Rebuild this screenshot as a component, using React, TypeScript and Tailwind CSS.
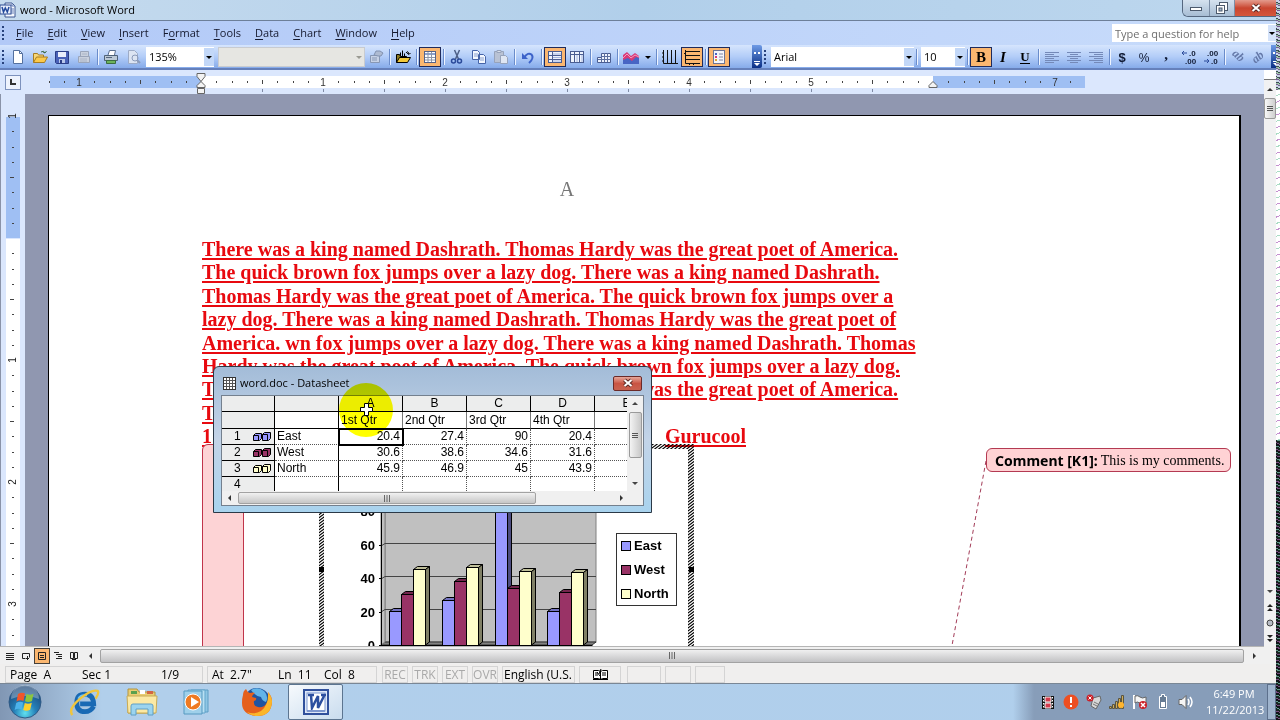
import type { ReactNode } from "react";
import clsx from "clsx";

const menus = [
  { label: "File", key: 0 },
  { label: "Edit", key: 0 },
  { label: "View", key: 0 },
  { label: "Insert", key: 0 },
  { label: "Format", key: 1 },
  { label: "Tools", key: 0 },
  { label: "Data", key: 0 },
  { label: "Chart", key: 0 },
  { label: "Window", key: 0 },
  { label: "Help", key: 0 },
];

const bodyLines = [
  "There was a king named Dashrath. Thomas Hardy was the great poet of America.",
  "The quick brown fox jumps over a lazy dog. There was a king named Dashrath.",
  "Thomas Hardy was the great poet of America. The quick brown fox jumps over a",
  "lazy dog. There was a king named Dashrath. Thomas Hardy was the great poet of",
  "America. wn fox jumps over a lazy dog. There was a king named Dashrath. Thomas",
  "Hardy was the great poet of America. The quick brown fox jumps over a lazy dog.",
  "There was a king named Dashrath. Thomas Hardy was the great poet of America.",
  "The quick brown fox jumps over a lazy dog.",
];

const sheetRows = [
  { n: 1, name: "East", color: "#9999ff", values: ["20.4", "27.4", "90", "20.4"] },
  { n: 2, name: "West", color: "#993366", values: ["30.6", "38.6", "34.6", "31.6"] },
  { n: 3, name: "North", color: "#ffffcc", values: ["45.9", "46.9", "45", "43.9"] },
];

const bars = [
  { x: 389, y: 610, s: 0 },
  { x: 401, y: 593, s: 1 },
  { x: 413, y: 568, s: 2 },
  { x: 442, y: 599, s: 0 },
  { x: 454, y: 580, s: 1 },
  { x: 466, y: 566, s: 2 },
  { x: 495, y: 495, s: 0 },
  { x: 507, y: 587, s: 1 },
  { x: 519, y: 570, s: 2 },
  { x: 547, y: 610, s: 0 },
  { x: 559, y: 591, s: 1 },
  { x: 571, y: 571, s: 2 },
];

const series = [
  { name: "East", front: "#9999ff", side: "#4d4d80", top: "#7373bf" },
  { name: "West", front: "#993366", side: "#4d1a33", top: "#73264d" },
  { name: "North", front: "#ffffcc", side: "#808066", top: "#bfbf99" },
];

function Arrow({ dir = "down", className = "text-black" }: { dir?: string; className?: string }) {
  const d: Record<string, string> = {
    down: "M1 3h6l-3 3z",
    up: "M1 5h6l-3-3z",
    left: "M5 1v6l-3-3z",
    right: "M3 1v6l3-3z",
  };
  return (
    <svg viewBox="0 0 8 8" className={clsx("h-2 w-2 shrink-0", className)}>
      <path d={d[dir]} fill="currentColor" />
    </svg>
  );
}

function Handle() {
  return (
    <svg viewBox="0 0 3 16" className="mx-[2px] h-4 w-[3px] shrink-0">
      {[1, 5, 9, 13].map((y) => (
        <rect key={y} y={y} width="2" height="2" fill="#27417c" />
      ))}
    </svg>
  );
}

function Sep() {
  return <span className="mx-[2px] h-4 w-px shrink-0 bg-[#6a8ccb] shadow-[1px_0_0_#eef4ff]" />;
}

function ToolButton({ label, active, children }: { label: string; active?: boolean; children: ReactNode }) {
  return (
    <button
      type="button"
      aria-label={label}
      className={clsx(
        "flex h-5 w-[22px] shrink-0 items-center justify-center",
        active && "border border-[#1f2b5c] bg-[#fbb770]"
      )}
    >
      <svg viewBox="0 0 16 16" className="h-4 w-4 shrink-0 overflow-visible" fill="none">
        {children}
      </svg>
    </button>
  );
}

function Combo({ label, value, className, disabled }: { label: string; value: string; className: string; disabled?: boolean }) {
  return (
    <label
      className={clsx(
        "flex h-5 shrink-0 items-center",
        disabled ? "border border-[#c8cbd0] bg-[#e6e6e2]" : "bg-white",
        className
      )}
    >
      <select
        aria-label={label}
        disabled={disabled}
        className="h-5 min-w-0 flex-1 appearance-none bg-transparent pl-[3px] text-[11px] leading-5 text-black outline-none"
      >
        <option>{value}</option>
      </select>
      <span className={clsx("flex h-[18px] w-[10px] items-center justify-center", !disabled && "bg-[#c3d8f8]")}>
        <Arrow className={disabled ? "text-[#9a9a92]" : "text-black"} />
      </span>
    </label>
  );
}

function Overflow() {
  return (
    <button type="button" aria-label="Toolbar options" className="flex h-[23px] w-[10px] shrink-0 items-end justify-center rounded-r-xs bg-linear-to-b from-[#6f9be6] to-[#0b2f86]">
      <svg viewBox="0 0 8 20" className="h-5 w-2" fill="#fff">
        <path d="M1 4h2v2H1zM5 4h2v2H5zM1 13h6v1H1zM1 15h6l-3 3z" />
      </svg>
    </button>
  );
}

function AppIcon({ className }: { className: string }) {
  return (
    <svg viewBox="0 0 16 16" className={className}>
      <path d="M5 1h7l3 3v11H5z" fill="#f6f9ff" stroke="#3d5690" />
      <path d="M12 1v3h3M11 7h3M11 9h3M11 11h3" stroke="#6b83ba" fill="none" />
      <rect x="0" y="3" width="11" height="9" fill="#e7eefb" stroke="#2b4a91" />
      <path d="M2 5l1.500 5L5.300 6l2 4L9 5" stroke="#234a9c" strokeWidth="1.500" fill="none" />
    </svg>
  );
}

function TitleBar() {
  return (
    <header className="flex h-[21px] shrink-0 border-b border-[#6d7f99] bg-linear-to-r from-[#c6dbee] via-[#b1cfea] to-[#bdd7ee]">
      <AppIcon className="mt-[2px] h-4 w-4" />
      <h1 className="ml-1 text-[11px] leading-5 text-black">word - Microsoft Word</h1>
      <div className="ml-auto flex h-[17px] overflow-hidden rounded-bl-md border-b border-l border-[#55677f]">
        <button type="button" aria-label="Minimize" className="flex w-[27px] items-center justify-center border-r border-[#7c8ea6] bg-linear-to-b from-[#d5e2ef] to-[#a7bdd4]">
          <svg viewBox="0 0 12 8" className="h-2 w-3"><rect x="0.500" y="3.500" width="11" height="3" fill="#fff" stroke="#4c5a6d" /></svg>
        </button>
        <button type="button" aria-label="Restore" className="flex w-[25px] items-center justify-center border-r border-[#7c8ea6] bg-linear-to-b from-[#d5e2ef] to-[#a7bdd4]">
          <svg viewBox="0 0 12 12" className="h-3 w-3" fill="#fff" stroke="#4c5a6d"><rect x="3.500" y="0.500" width="8" height="8" /><rect x="0.500" y="3.500" width="8" height="8" /><rect x="3" y="6" width="3" height="3" fill="#9fb4ca" /></svg>
        </button>
        <button type="button" aria-label="Close" className="flex w-[41px] items-center justify-center bg-linear-to-b from-[#e39a8c] via-[#c9452f] to-[#d5573c]">
          <CloseX />
        </button>
      </div>
    </header>
  );
}

function CloseX() {
  return (
    <svg viewBox="0 0 12 10" className="h-[10px] w-3">
      <path d="M2.500 2l7 6M9.500 2l-7 6" stroke="#5b2a25" strokeWidth="4" />
      <path d="M2.500 2l7 6M9.500 2l-7 6" stroke="#fff" strokeWidth="2" />
    </svg>
  );
}

function MenuBar() {
  return (
    <nav className="flex h-6 shrink-0 items-center bg-linear-to-r from-[#b2c9f7] to-[#c8dcfb]">
      <Handle />
      <ul className="ml-[2px] flex">
        {menus.map((m) => (
          <li key={m.label}>
            <a href="#" className="block px-[7px] text-[11px] leading-6 text-[#15192e]">
              {m.label.slice(0, m.key)}
              <span className="underline underline-offset-2">{m.label[m.key]}</span>
              {m.label.slice(m.key + 1)}
            </a>
          </li>
        ))}
      </ul>
      <div className="ml-auto flex h-[18px] w-[164px] items-center bg-white">
        <input
          type="text"
          aria-label="Type a question for help"
          placeholder="Type a question for help"
          className="h-full min-w-0 flex-1 pl-[3px] text-[11px] outline-none placeholder:text-[#6f6f6f]"
        />
        <button type="button" aria-label="Recent questions" className="flex h-4 w-2 items-center justify-center bg-[#d5e3fa]">
          <Arrow />
        </button>
      </div>
    </nav>
  );
}

function TextAlign({ kind }: { kind: string }) {
  const short: Record<string, string> = {
    left: "M1 5.500h9M1 9.500h9M1 13.500h9",
    center: "M4 5.500h8M4 9.500h8M4 13.500h8",
    right: "M6 5.500h9M6 9.500h9M6 13.500h9",
  };
  return <path d={"M1 3.500h14M1 7.500h14M1 11.500h14" + short[kind]} stroke="#7489b8" />;
}

function Toolbar() {
  return (
    <div className="flex h-[25px] shrink-0 items-center overflow-hidden border-b-2 border-[#6580bb] bg-linear-to-b from-[#d6e5fd] via-[#b3cdf8] to-[#86abea]">
      <Handle />
      <ToolButton label="New"><path d="M3.500 1.500h6l3 3v10h-9z" fill="#fff" stroke="#54709f" /><path d="M9.500 1.500v3h3" stroke="#54709f" /></ToolButton>
      <ToolButton label="Open">
        <path d="M1.500 13.500v-9h4l1 1.500h5v3" fill="#f7d77a" stroke="#a77d22" />
        <path d="M1.500 13.500L4.500 8h11l-3 5.500z" fill="#fbc94b" stroke="#a77d22" />
        <path d="M9 3q3-2 4 1m0 0l-2-1m2 1l1.500-2" stroke="#3f6a48" />
      </ToolButton>
      <ToolButton label="Save">
        <path d="M1.500 2.500h13v12h-12l-1-1z" fill="#4a62b8" stroke="#2b3d86" />
        <rect x="4" y="3" width="8" height="5" fill="#e9eefc" />
        <rect x="5" y="10" width="6" height="4" fill="#b9c7ea" /><rect x="6" y="11" width="2" height="3" fill="#2b3d86" />
      </ToolButton>
      <ToolButton label="Permission"><path d="M4.500 2.500h8v5h-8zM2.500 7.500h11v6h-11z" fill="#c9d0dd" stroke="#9aa5ba" /><path d="M4 10h7M4 12h7M6 5h5" stroke="#aab4c6" /></ToolButton>
      <Sep />
      <ToolButton label="Print">
        <path d="M5 6l1.500-4.500h6L11.500 6" fill="#fff" stroke="#5b6f8e" />
        <path d="M1.500 6.500h13v5h-13z" fill="#bcc9d6" stroke="#4f6278" />
        <path d="M3.500 11.500h9v3h-9z" fill="#6db35c" stroke="#3b6d41" /><path d="M3 8.500h6" stroke="#56677d" />
      </ToolButton>
      <ToolButton label="Print preview"><path d="M3.500 1.500h6l3 3v10h-9z" fill="#dce4f2" stroke="#9dabc6" /><circle cx="10" cy="9" r="3" stroke="#8b9bba" /><path d="M12 11l3 3" stroke="#8b9bba" strokeWidth="2" /></ToolButton>
      <Combo label="Zoom" value="135%" className="ml-[2px] w-[68px]" />
      <Combo label="Chart objects" value="" disabled className="ml-1 w-[147px]" />
      <ToolButton label="Format object"><path d="M2.500 6.500h9v7h-9z" fill="#c7d2e6" stroke="#8797b4" /><path d="M4 9h5M4 11h5" stroke="#8797b4" /><path d="M6 6l2-4h4l3 2-2 3h-3z" fill="#aebbd2" stroke="#8292b0" /></ToolButton>
      <Sep />
      <ToolButton label="Import file">
        <path d="M1.500 13.500v-8h3l1 2h6v2" fill="#8a7a22" stroke="#000" />
        <path d="M1.500 13.500l3-5h11l-3 5z" fill="#f2c838" stroke="#000" />
        <path d="M5.500 7V3.500M7.500 7V1.500M9.500 7V4.500M11 4q2-3 3 1m-2-1l2 1.500L15.500 4" stroke="#000" />
      </ToolButton>
      <Sep />
      <ToolButton label="View datasheet" active><rect x="2.500" y="2.500" width="11" height="11" fill="#fff" stroke="#58648a" /><path d="M3 5h10" stroke="#8ea2cf" strokeWidth="2" /><path d="M3 8.500h10M3 11h10M6 3v10M9.500 3v10" stroke="#8e95a8" /></ToolButton>
      <Sep />
      <ToolButton label="Cut"><path d="M5.500 1l4 9M10.500 1l-4 9" stroke="#4d5f86" strokeWidth="1.500" /><circle cx="4.500" cy="12" r="2" stroke="#2a4a9a" strokeWidth="1.500" /><circle cx="10.500" cy="12" r="2" stroke="#2a4a9a" strokeWidth="1.500" /></ToolButton>
      <ToolButton label="Copy"><path d="M1.500 1.500h5l2 2v7h-7zM7.500 5.500h5l2 2v7h-7z" fill="#f4f8ff" stroke="#4664a8" /><path d="M3 5h4M3 7h4M9 9h4M9 11h4" stroke="#8aa0cd" /></ToolButton>
      <ToolButton label="Paste"><path d="M1.500 2.500h9v11h-9z" fill="#b9c2d4" stroke="#97a3bb" /><path d="M4 1.500h4v2H4z" fill="#d9dfeb" stroke="#97a3bb" /><path d="M7.500 6.500h5l2 2v6h-7z" fill="#dfe6f3" stroke="#97a3bb" /></ToolButton>
      <Sep />
      <ToolButton label="Undo"><path d="M2 4v6h6z" fill="#3d63c9" /><path d="M4.500 8Q8 3 11.500 5.500q3 3.500-2.500 8.500" stroke="#3d63c9" strokeWidth="2" /></ToolButton>
      <Sep />
      <ToolButton label="By row" active><rect x="1.500" y="2.500" width="13" height="11" fill="#eef3fd" stroke="#4a5d91" /><path d="M2 6.500h12M2 10.500h12M5.500 3v10" stroke="#4a5d91" /><path d="M6 5h8M6 8.500h8M6 12h8" stroke="#a4b6e0" /></ToolButton>
      <ToolButton label="By column"><rect x="1.500" y="2.500" width="13" height="11" fill="#eef3fd" stroke="#4a5d91" /><path d="M2 5.500h12M5.500 3v10M10.500 3v10" stroke="#4a5d91" /><path d="M8 6v7M13 6v7" stroke="#a4b6e0" /></ToolButton>
      <Sep />
      <ToolButton label="Data table"><path d="M5.500 4.500h9v9h-13v-5h4z" fill="#eef3fd" stroke="#4a5d91" /><path d="M2 10.500h12M5.500 7.500h9M5.500 8v5M8.500 4v9M11.500 4v9" stroke="#5c6f9f" /></ToolButton>
      <Sep />
      <ToolButton label="Chart type"><path d="M0 6l4-3 4 4 4-3 4 3v7H0z" fill="#d83a78" /><path d="M0 11l5-2 4 3 4-4 3 1v6H0z" fill="#4865c4" /><path d="M0 9l4-4 4 4 4-3 4 2" stroke="#f59abd" /></ToolButton>
      <button type="button" aria-label="More chart types" className="flex h-5 w-3 shrink-0 items-center justify-center"><Arrow /></button>
      <Sep />
      <ToolButton label="Category axis gridlines"><path d="M1.500 1v13.500H16M5.500 1v13M9.500 1v13M13.500 1v13M0 4h2M0 8h2M0 12h2" stroke="#111" /></ToolButton>
      <ToolButton label="Value axis gridlines" active><path d="M1.500 1v13.500H16M1.500 2.500H16M1.500 6.500H16M1.500 10.500H16M0 4.500h2M5.500 14v2M9.500 14v2" stroke="#111" /></ToolButton>
      <Sep />
      <ToolButton label="Legend" active><rect x="2.500" y="1.500" width="11" height="13" fill="#f5f5fa" stroke="#6c7596" /><path d="M4 4h2v2H4z" fill="#4865c4" /><path d="M4 7h2v2H4z" fill="#d83a78" /><path d="M4 10h2v2H4z" fill="#e0a62c" /><path d="M8 5h4M8 8h4M8 11h4" stroke="#7c84a0" /></ToolButton>
      <span className="w-[22px] shrink-0" />
      <Overflow />
      <Handle />
      <Combo label="Font" value="Arial" className="ml-[2px] w-[143px]" />
      <Sep />
      <Combo label="Font size" value="10" className="ml-[2px] w-[44px]" />
      <Sep />
      <ToolButton label="Bold" active><text x="8" y="13" textAnchor="middle" fill="#000" className="font-['Liberation_Serif'] text-[15px] font-bold">B</text></ToolButton>
      <ToolButton label="Italic"><text x="8" y="13" textAnchor="middle" fill="#000" className="font-['Liberation_Serif'] text-[15px] font-bold italic">I</text></ToolButton>
      <ToolButton label="Underline"><text x="8" y="12" textAnchor="middle" fill="#000" className="font-['Liberation_Serif'] text-[13px] font-bold">U</text><path d="M3 14.500h10" stroke="#000" /></ToolButton>
      <Sep />
      <ToolButton label="Align left"><TextAlign kind="left" /></ToolButton>
      <ToolButton label="Center"><TextAlign kind="center" /></ToolButton>
      <ToolButton label="Align right"><TextAlign kind="right" /></ToolButton>
      <Sep />
      <ToolButton label="Currency style"><text x="7" y="13" textAnchor="middle" fill="#101a33" className="font-['Liberation_Sans'] text-[13px] font-bold">$</text></ToolButton>
      <ToolButton label="Percent style"><text x="7" y="13" textAnchor="middle" fill="#101a33" className="font-['Liberation_Sans'] text-[12px]">%</text></ToolButton>
      <ToolButton label="Comma style"><text x="7" y="10" textAnchor="middle" fill="#101a33" className="font-['Liberation_Serif'] text-[15px] font-bold">,</text></ToolButton>
      <ToolButton label="Increase decimal"><path d="M1 4h5M1 4l2-2M1 4l2 2" stroke="#2a4a9a" /><text x="8" y="7" fill="#101a33" className="font-['Liberation_Sans'] text-[8px] font-bold">.0</text><text x="4" y="15" fill="#101a33" className="font-['Liberation_Sans'] text-[8px] font-bold">.00</text></ToolButton>
      <ToolButton label="Decrease decimal"><path d="M1 12h5M6 12l-2-2M6 12l-2 2" stroke="#2a4a9a" /><text x="4" y="7" fill="#101a33" className="font-['Liberation_Sans'] text-[8px] font-bold">.00</text><text x="8" y="15" fill="#101a33" className="font-['Liberation_Sans'] text-[8px] font-bold">.0</text></ToolButton>
      <Sep />
      <ToolButton label="Angle clockwise"><text x="1" y="9" fill="#6478a8" transform="rotate(40 6 8)" className="font-['Liberation_Serif'] text-[12px] font-bold italic">ab</text></ToolButton>
      <ToolButton label="Angle counterclockwise"><text x="1" y="12" fill="#6478a8" transform="rotate(-40 6 10)" className="font-['Liberation_Serif'] text-[12px] font-bold italic">ab</text></ToolButton>
      <Overflow />
    </div>
  );
}

// 122px to the inch, eight divisions per inch, origin at the left margin
function HorizontalRuler() {
  const ticks = Array.from({ length: 69 }, (_, i) => i - 10);
  return (
    <div className="flex h-6 shrink-0 items-center bg-[#dbe7fd] pl-[5px]">
      <button type="button" aria-label="Tab stop" className="flex h-[15px] w-4 shrink-0 items-center justify-center border border-[#7d92bd] bg-[#eef3fd]">
        <svg viewBox="0 0 8 8" className="h-2 w-2"><path d="M2 1v5h5" stroke="#333" strokeWidth="2" fill="none" /></svg>
      </button>
      <svg viewBox="-172 0 1060 24" className="ml-2 h-6 w-[1060px] shrink-0">
        <rect x="-151" y="6" width="151" height="12" fill="#9fbff3" />
        <rect x="0" y="6" width="732" height="12" fill="#fff" />
        <rect x="732" y="6" width="152" height="12" fill="#9fbff3" />
        {ticks.map((t) => {
          const x = t * 15.25;
          if (t === 0) return null;
          if (t % 8 === 0)
            return (
              <text key={t} x={x} y="16" textAnchor="middle" fill="#333" className="font-['Liberation_Sans'] text-[10px]">
                {t === 48 ? "" : Math.abs(t / 8)}
              </text>
            );
          if (t > 57) return null;
          return <rect key={t} x={Math.round(x)} y={t % 4 === 0 ? 10 : 11} width="1" height={t % 4 === 0 ? 4 : 2} fill="#444" />;
        })}
        {ticks.filter((t) => t > 0 && t < 47 && t % 4 === 0).map((t) => (
          <rect key={t} x={Math.round(t * 15.25)} y="19" width="1" height="3" fill="#7f8aa5" />
        ))}
        <path d="M-4 3.500h8v3l-4 5-4-5zM-4 17.500v-2l4-4 4 4v2zM-3.500 18.500h7v5h-7z" fill="#f3f3f3" stroke="#666" />
        <path d="M728 17.500v-2l4-4 4 4v2z" fill="#f3f3f3" stroke="#666" />
      </svg>
    </div>
  );
}

function VerticalRuler() {
  return (
    <div className="h-full w-[25px] shrink-0 overflow-hidden border-l border-[#8a93a8] bg-[#dbe7fd]">
      <svg viewBox="1 94 24 700" className="h-[700px] w-6">
        <rect x="6" y="117" width="14" height="121" fill="#9fbff3" />
        <rect x="6" y="239" width="14" height="555" fill="#fff" />
        {Array.from({ length: 44 }, (_, i) => i - 8).map((t) => {
          const y = Math.round(238 + t * 15.25);
          if (t === 0) return null;
          if (t % 8 === 0)
            return (
              <text key={t} x="13" y={y + 3} textAnchor="middle" transform={`rotate(-90 13 ${y})`} fill="#222" className="font-['Liberation_Sans'] text-[10px]">
                {t === 24 ? 3 : Math.abs(t / 8)}
              </text>
            );
          return <rect key={t} x={t % 4 === 0 ? 10 : 12} y={y} width={t % 4 === 0 ? 4 : 2} height="1" fill="#444" />;
        })}
      </svg>
    </div>
  );
}

function ChartObject() {
  return (
    <svg viewBox="319 443 375 240" className="h-[240px] w-[375px] shrink-0" role="img" aria-label="Quarterly chart">
      <defs>
        <pattern id="hatch" width="4" height="3" patternUnits="userSpaceOnUse">
          <path d="M0 3L4 0M-1 .75L1-.75M3 3.750L5 2.250" stroke="#000" strokeWidth="1.100" />
        </pattern>
      </defs>
      <path d="M319 443h375v240H319zM324 448v235h364V448z" fillRule="evenodd" fill="url(#hatch)" />
      <rect x="319" y="566" width="5" height="5" />
      <rect x="689" y="566" width="5" height="5" />
      <rect x="385" y="470" width="211" height="171" fill="#c0c0c0" stroke="#808080" />
      <path d="M381 644l4-3h211l-4 3z" fill="#808080" stroke="#333" />
      <path d="M381 474l4-4v171l-4 3z" fill="#c0c0c0" stroke="#808080" />
      {[508, 542, 575, 608].map((y) => (
        <path key={y} d={`M381 ${y + 3}l4-2.500h211`} stroke="#444" fill="none" />
      ))}
      <path d="M381.500 470v176M379 644.500h213M379 611.500h3M379 577.500h3M379 544.500h3M434 644v3M486.500 644v3M539.500 644v3M592 644v3" stroke="#000" />
      {bars.map((b) => (
        <g key={b.x} stroke="#000" strokeWidth="1">
          <path d={`M${b.x + 0.5} ${b.y + 0.5}l4-3h12l-4 3z`} fill={series[b.s].top} />
          <path d={`M${b.x + 12.5} ${b.y + 0.5}l4-3V641l-4 3z`} fill={series[b.s].side} />
          <rect x={b.x + 0.5} y={b.y + 0.5} width="12" height={644 - b.y} fill={series[b.s].front} />
        </g>
      ))}
      <g className="font-['Liberation_Sans'] text-[13px] font-bold" textAnchor="end">
        <text x="375" y="515">80</text>
        <text x="375" y="549">60</text>
        <text x="375" y="582">40</text>
        <text x="375" y="616">20</text>
        <text x="375" y="649">0</text>
      </g>
      <rect x="616.500" y="532.500" width="60" height="72" fill="#fff" stroke="#333" />
      {series.map((s, i) => (
        <g key={s.name}>
          <rect x="621.500" y={540.5 + i * 24} width="9" height="9" fill={s.front} stroke="#000" />
          <text x="634" y={549 + i * 24} className="font-['Liberation_Sans'] text-[13px] font-bold">{s.name}</text>
        </g>
      ))}
    </svg>
  );
}

function DatasheetWindow() {
  const head = "h-4 border-r border-b border-black bg-[#eceded] font-normal";
  const grid = "border-r border-b border-dotted border-[#555]";
  return (
    <section className="absolute top-[296px] left-[213px] w-[439px] rounded-t-md border border-[#2b3947] bg-linear-to-b from-[#a3bcd8] via-[#c3d4e8] to-[#a9d3ee] px-[7px] pb-[6px]">
      <div className="flex h-7 items-center pt-1">
        <svg viewBox="0 0 13 13" className="ml-[2px] h-[13px] w-[13px]"><rect x="0.500" y="0.500" width="12" height="12" fill="#fff" stroke="#333" /><path d="M1 3.500h11M1 6.500h11M1 9.500h11M3.500 1v11M6.500 1v11M9.500 1v11" stroke="#555" /></svg>
        <h2 className="ml-1 text-[11px] text-black">word.doc - Datasheet</h2>
        <button type="button" aria-label="Close datasheet" className="mr-[2px] ml-auto flex h-[15px] w-[29px] items-center justify-center rounded-xs border border-[#6b2a28] bg-linear-to-b from-[#e5a79b] via-[#c95443] to-[#c96250]">
          <CloseX />
        </button>
      </div>
      <div className="border border-[#74808e] bg-[#f0f0f0]">
        <div className="flex">
          <div className="h-[95px] min-w-0 flex-1 overflow-hidden bg-white">
            <table className="w-[437px] table-fixed border-separate border-spacing-0 font-['Liberation_Sans'] text-[12px] leading-[15px] text-black">
              <colgroup>
                <col className="w-[53px]" />
                <col className="w-[64px]" />
                <col className="w-[64px]" />
                <col className="w-[64px]" />
                <col className="w-[64px]" />
                <col className="w-[64px]" />
                <col className="w-[64px]" />
              </colgroup>
              <thead>
                <tr>
                  <th className={head} />
                  <th className={head} />
                  {["A", "B", "C", "D", "E"].map((c) => (
                    <th key={c} className={head}>{c}</th>
                  ))}
                </tr>
                <tr>
                  <th className={head} />
                  <th className="h-[17px] border-r border-b border-black" />
                  {["1st Qtr", "2nd Qtr", "3rd Qtr", "4th Qtr", ""].map((q) => (
                    <th key={q} className="h-[17px] border-r border-b border-r-[#777] border-b-black pl-[2px] text-left font-normal whitespace-nowrap">{q}</th>
                  ))}
                </tr>
              </thead>
              <tbody>
                {sheetRows.map((r) => (
                  <tr key={r.n}>
                    <th className={head}>
                      <span className="flex items-center justify-between pr-[3px] pl-3">
                        {r.n}
                        <svg viewBox="0 0 18 9" className="h-[9px] w-[18px]" stroke="#000">
                          <path d="M.5 3.500l2-2h6v5l-2 2h-6z" fill={r.color} /><path d="M9.500 2.500l2-2h6v6l-2 2h-6z" fill={r.color} />
                          <path d="M.5 3.500h5v5M9.500 2.500h5v6" fill="none" />
                        </svg>
                      </span>
                    </th>
                    <th className="h-4 border-r border-b border-r-black border-b-[#555] [border-bottom-style:dotted] pl-[2px] text-left font-normal">{r.name}</th>
                    {r.values.map((v, i) => (
                      <td key={i} className={clsx("h-4 pr-[2px] text-right", grid, r.n === 1 && i === 0 && "outline-2 -outline-offset-1 outline-black")}>{v}</td>
                    ))}
                    <td className={clsx("h-4", grid)} />
                  </tr>
                ))}
                <tr>
                  <th className={head}><span className="block pl-3 text-left">4</span></th>
                  <th className="h-4 border-r border-black" />
                  {[0, 1, 2, 3, 4].map((c) => (
                    <td key={c} className={clsx("h-4", grid)} />
                  ))}
                </tr>
              </tbody>
            </table>
          </div>
          <div className="flex w-4 flex-col items-center bg-[#f0f0f0] py-1">
            <Arrow dir="up" className="text-[#444]" />
            <div className="mt-1 flex h-[46px] w-[13px] items-center justify-center rounded-xs border border-[#9a9a9a] bg-linear-to-r from-[#f3f3f3] to-[#c9c9c9]">
              <svg viewBox="0 0 6 7" className="h-[7px] w-[6px]"><path d="M0 1.500h6M0 3.500h6M0 5.500h6" stroke="#555" /></svg>
            </div>
            <Arrow className="mt-auto text-[#444]" />
          </div>
        </div>
        <div className="flex h-[14px] items-center">
          <Arrow dir="left" className="mx-1 text-[#333]" />
          <div className="flex h-3 w-[298px] items-center justify-center rounded-xs border border-[#a2a2a2] bg-linear-to-b from-[#f1f1f1] to-[#c6c6c6]">
            <Grip />
          </div>
          <Arrow dir="right" className="mr-[18px] ml-auto text-[#333]" />
        </div>
      </div>
      <svg viewBox="0 0 60 60" className="absolute top-[13px] left-[122px] h-[60px] w-[60px] mix-blend-multiply"><circle cx="30" cy="30" r="27" fill="#ffff00" /></svg>
      <svg viewBox="0 0 16 16" className="absolute top-[35px] left-[145px] h-4 w-4"><path d="M5.500 1.500h4v4h4v4h-4v4h-4v-4h-4v-4h4z" fill="#fff" stroke="#000" /></svg>
    </section>
  );
}

function Grip() {
  return (
    <svg viewBox="0 0 8 7" className="h-[7px] w-2"><path d="M1.500 0v7M4 0v7M6.500 0v7" stroke="#666" /></svg>
  );
}

function DocumentArea() {
  return (
    <div className="flex min-h-0 flex-1">
      <VerticalRuler />
      <div className="flex min-w-0 flex-1 overflow-hidden bg-[#9097b0] pt-[21px] pr-[23px] pl-[23px]">
        <article className="flex min-w-0 flex-1 self-stretch border-t border-r-2 border-l border-black bg-white pl-[153px] font-['Liberation_Serif']">
          <div className="w-[730px] shrink-0">
            <p className="pt-[61px] text-center text-[20px] leading-6 text-[#777]">A</p>
            <div className="mt-[37px] flex h-[210px] flex-col justify-between text-[20px] leading-[23px] font-bold whitespace-nowrap text-[#e8090f]">
              {bodyLines.map((line, i) => (
                <p key={i} className="underline decoration-2 underline-offset-2">{line}</p>
              ))}
              <p className="flex justify-between pr-[186px] underline decoration-2 underline-offset-2">
                <span>1</span>
                <span>Gurucool</span>
              </p>
            </div>
            <div className="-mt-1 flex">
              <div className="mr-[75px] h-[240px] w-[42px] rounded-t-md border border-[#c0344a] bg-[#fdd3d5]" />
              <ChartObject />
            </div>
          </div>
          <aside className="relative min-w-0 flex-1 pt-[332px] pl-[54px]">
            <p className="flex h-6 w-[245px] items-center rounded-md border border-[#b43a52] bg-[#ffd2d4] pl-2 text-[14px] whitespace-nowrap text-black">
              <strong className="mr-[3px] font-['Noto_Sans'] text-[14px]">Comment [K1]:</strong>
              This is my comments.
            </p>
            <svg viewBox="0 0 40 190" className="absolute top-[345px] left-[16px] h-[190px] w-10"><path d="M38 0L3 190" stroke="#a33c58" strokeDasharray="4 3" /></svg>
          </aside>
        </article>
      </div>
    </div>
  );
}

function VerticalScrollbar() {
  return (
    <div className="flex w-3 shrink-0 flex-col items-center bg-[#f1f1f2]">
      <span className="h-[10px] w-full border-b border-[#777] bg-white" />
      <Arrow dir="up" className="mt-[6px] text-[#333]" />
      <div className="mt-1 flex h-[21px] w-full items-center justify-center rounded-xs border border-[#999] bg-linear-to-r from-[#f8f8f8] to-[#cfcfcf]">
        <svg viewBox="0 0 6 7" className="h-[7px] w-[6px]"><path d="M0 1.500h6M0 3.500h6M0 5.500h6" stroke="#555" /></svg>
      </div>
      <div className="mt-auto mb-[3px] flex flex-col items-center gap-2">
        <Arrow className="text-[#444]" />
        <svg viewBox="0 0 8 8" className="h-2 w-2"><path d="M1 4l3-3 3 3zM1 8l3-3 3 3z" fill="#222" /></svg>
        <svg viewBox="0 0 8 8" className="h-2 w-2"><circle cx="4" cy="4" r="3" fill="#b8bcc6" stroke="#444" /></svg>
        <svg viewBox="0 0 8 8" className="h-2 w-2"><path d="M1 0h6L4 3zM1 4h6L4 7z" fill="#222" /></svg>
      </div>
    </div>
  );
}

function HorizontalScrollbar() {
  const views = [
    "M1 2.500h8M1 4.500h8M1 6.500h8M1 8.500h8",
    "M1.500 2.500h7v4M1.500 2.500v5h3M5 7.500h3M6.500 5v4",
    "M1.500 1.500h7v7h-7zM3 4.500h4M3 6.500h4",
    "M1 1.500h5M3 3.500h6M5 5.500h4M3 7.500h6",
    "M1.500 1.500h3v6h-3zM5.500 1.500h3v6h-3zM3 8.500h4",
  ];
  return (
    <div className="flex h-[18px] shrink-0 items-center border-t border-[#b5b5b5] bg-[#f0f0f0] pl-[2px]">
      {views.map((d, i) => (
        <button key={d} type="button" aria-label={`View ${i + 1}`} className={clsx("flex h-4 w-4 items-center justify-center", i === 2 && "border border-[#44403a] bg-[#fbb770]")}>
          <svg viewBox="0 0 10 10" className="h-[10px] w-[10px] shrink-0"><path d={d} stroke="#222" fill="none" /></svg>
        </button>
      ))}
      <Arrow dir="left" className="mx-[5px] text-[#333]" />
      <div className="flex h-[14px] flex-1 items-center justify-center rounded-xs border border-[#a2a2a2] bg-linear-to-b from-[#f0f0f0] to-[#c2c2c4]">
        <Grip />
      </div>
      <Arrow dir="right" className="mx-[6px] text-[#333]" />
    </div>
  );
}

function StatusBar() {
  const box = "flex h-[17px] shrink-0 items-center border border-[#d4d4d4] whitespace-nowrap";
  return (
    <footer className="flex h-[20px] shrink-0 items-center border-b border-[#7a8795] bg-[#f0efee] pt-[2px] pl-[5px] text-[12px] text-black">
      <div className={clsx(box, "w-[198px] pl-1")}>
        <span className="w-[72px]">Page&nbsp; A</span>
        <span className="w-[79px]">Sec 1</span>
        <span>1/9</span>
      </div>
      <div className={clsx(box, "ml-1 w-[170px] pl-1")}>
        <span className="w-[66px]">At&nbsp; 2.7"</span>
        <span className="w-[46px]">Ln&nbsp; 11</span>
        <span>Col&nbsp; 8</span>
      </div>
      <div className="ml-[5px] flex gap-1 text-[#a9a9a9]">
        {["REC", "TRK", "EXT", "OVR"].map((m) => (
          <span key={m} className={clsx(box, "w-[26px] justify-center")}>{m}</span>
        ))}
      </div>
      <div className={clsx(box, "ml-1 w-[73px] pl-px")}>English (U.S.</div>
      <div className={clsx(box, "ml-1 w-[42px] justify-center")}>
        <svg viewBox="0 0 17 13" className="h-[13px] w-[17px]"><path d="M1.500 2.500h5l2 1 2-1h5v8h-5l-2 1-2-1h-5z" fill="#fff" stroke="#000" /><path d="M8.500 3v8M1 11.500h15M10 5h4M10 7h4M3 5h3M3 7h3M5 4l3 4M9 1L7 6" stroke="#000" /></svg>
      </div>
      <div className={clsx(box, "ml-[6px] w-[34px]")} />
      <div className={clsx(box, "ml-1 w-[26px]")} />
      <div className={clsx(box, "ml-1 w-[30px]")} />
    </footer>
  );
}

function Taskbar() {
  const slot = "flex h-full w-[58px] items-center justify-center";
  return (
    <div className="flex h-9 shrink-0 items-center bg-linear-to-r from-[#8197b4] via-[#b1cfeb] via-8% to-[#b0cfec] text-white">
      <button type="button" aria-label="Start" className="flex h-full w-[50px] items-center justify-center">
        <svg viewBox="0 0 34 34" className="h-[34px] w-[34px]">
          <defs>
            <radialGradient id="orb" cx="50%" cy="85%" r="85%"><stop offset="0" stopColor="#5fe0f0" /><stop offset=".4" stopColor="#2580b8" /><stop offset="1" stopColor="#1b3f70" /></radialGradient>
          </defs>
          <circle cx="17" cy="17" r="16" fill="url(#orb)" stroke="#315a85" />
          <path d="M3 14a14 14 0 0 1 28 0q-14-6-28 0z" fill="#fff" opacity=".3" />
          <path d="M10 9q3.500-2 7-.5L15.500 16q-3.500-1.500-7 .5z" fill="#f0562b" />
          <path d="M18.500 9q3.500 1.500 7-.3L24 16q-3.500 2-7 .3z" fill="#8cc63e" />
          <path d="M8.200 18q3.500-2 7-.5l-1.600 7q-3.500-1.500-7 .5z" fill="#4db2ea" />
          <path d="M16.800 18q3.500 1.500 7-.3l-1.600 7q-3.500 2-7 .3z" fill="#fdd02c" />
        </svg>
      </button>
      <a href="#" aria-label="Internet Explorer" className="flex h-full w-[68px] items-center justify-center">
        <svg viewBox="0 0 32 30" className="h-[29px] w-8" fill="none">
          <path d="M26 19q-3 5.500-9 5.500-8.500 0-8.500-9t8.500-9q8.500 0 9 10H12" stroke="#1969b4" strokeWidth="5" />
          <path d="M10 11q3-5 9-3" stroke="#6fc2f0" strokeWidth="2" />
          <path d="M4 28Q-1 22 12 11 24 1 30 3q2 2-2 8" stroke="#f0c53c" strokeWidth="2.500" />
        </svg>
      </a>
      <a href="#" aria-label="Explorer" className="flex h-full w-12 items-center justify-center">
        <svg viewBox="0 0 32 28" className="h-7 w-8">
          <path d="M2 4V1h9l2 3h16v21H2z" fill="#e9cd73" stroke="#b4953e" /><path d="M5 3h6v3H5z" fill="#5aa14e" /><path d="M14 2h5v4h-5z" fill="#fff" /><path d="M21 3h6v3h-6z" fill="#d26543" />
          <path d="M1 8h30l-1 17H2z" fill="#fbe9a5" stroke="#c9ab55" />
          <path d="M5 27v-9q0-2 2-2h18q2 0 2 2v9h-5v-6H10v6z" fill="#9bd4ef" stroke="#5f9fc6" />
        </svg>
      </a>
      <a href="#" aria-label="Media Player" className={slot}>
        <svg viewBox="0 0 28 26" className="ml-1 h-[26px] w-7">
          <path d="M8 1h17v22H8z" fill="#8fc6e4" stroke="#5c9dc4" /><path d="M5 1h17v23H5z" fill="#b9e0f3" stroke="#62a5cb" /><path d="M1 2h18v23H1z" fill="#9fd0ea" stroke="#5799c1" />
          <circle cx="10" cy="13" r="8" fill="#ef7a22" stroke="#fff" /><path d="M8 8v10l8-5z" fill="#fff" />
        </svg>
      </a>
      <a href="#" aria-label="Firefox" className={slot}>
        <svg viewBox="0 0 32 32" className="ml-2 h-8 w-8">
          <circle cx="16" cy="15" r="13" fill="#1f54a0" />
          <path d="M10 4q7-4 13 1 5 5 2 11-4-1-5-5-5 0-10-7z" fill="#62b4e8" />
          <path d="M2 9q0-4 3-6 1 3 4 4 3-1 5 0-3 2-3 4l4 1q1 2-2 3-1 5 4 6 5 1 8-3 4-5 2-12 4 4 4 10-1 14-15 14Q1 29 1 17q0-5 1-8z" fill="#e5601c" />
          <path d="M27 6q4 5 4 10-1 14-15 14-6 0-10-4 7 3 14-1 8-6 7-19z" fill="#fbb62a" />
        </svg>
      </a>
      <button type="button" aria-label="word - Microsoft Word" className="ml-[6px] flex h-9 w-[55px] items-center justify-center rounded-xs border border-[#5c7590] bg-linear-to-br from-[#f7fafd] to-[#c9dcee]">
        <svg viewBox="0 0 26 26" className="h-[26px] w-[26px]">
          <rect x="1" y="1" width="24" height="24" fill="#dfe8f8" stroke="#30509c" strokeWidth="2" />
          <rect x="4" y="4" width="18" height="18" fill="#fff" stroke="#7d97cf" />
          <path d="M5 6h6M8 6l1 13 6-12 0 12L21 7M18 6h5" stroke="#2c4f9f" strokeWidth="2.500" fill="none" />
          <path d="M4 22h18" stroke="#7d97cf" strokeWidth="2" />
        </svg>
      </button>
      <div className="ml-auto flex h-full items-center bg-linear-to-r from-transparent to-[#879db9] to-8% pl-[27px]">
        <div className="flex items-center gap-[7px]">
          <svg viewBox="0 0 16 16" className="h-4 w-4"><rect x="2" y="2" width="12" height="13" fill="#111" /><path d="M5 3h6v5H5zM5 9h6v5H5z" fill="#d33b4c" stroke="#fff" /><path d="M3.500 3v12M12.500 3v12" stroke="#fff" strokeDasharray="1.500 1.500" /></svg>
          <svg viewBox="0 0 16 16" className="h-4 w-4"><circle cx="8" cy="8" r="7.500" fill="#ee4f22" /><path d="M8 3v6M8 11v2" stroke="#fff" strokeWidth="2" /></svg>
          <svg viewBox="0 0 16 16" className="h-4 w-4"><path d="M7 4l7-2 1 4-5 9-5-3z" fill="#d7d7d7" stroke="#666" /><path d="M8 8l4 2M7 10l4 2" stroke="#777" /><circle cx="4" cy="4" r="3.500" fill="#cc2028" /><path d="M2.500 2.500l3 3M5.500 2.500l-3 3" stroke="#fff" /></svg>
          <svg viewBox="0 0 16 16" className="h-4 w-4"><path d="M.5 12.500h2v2h-2zM3.500 10.500h2v4h-2zM6.500 7.500h2v7h-2zM9.500 4.500h2v10h-2zM12.500 1.500h2v13h-2z" fill="#cfae5a" stroke="#5b5540" /><circle cx="12" cy="11" r="3" fill="#ffb52e" /></svg>
          <svg viewBox="0 0 16 16" className="h-4 w-4"><path d="M2 1v14" stroke="#fff" strokeWidth="2" /><path d="M3 2q3-1 5 1t6 0v6q-3 2-6 0t-5 0z" fill="#f5f5f5" stroke="#666" /><circle cx="11" cy="11" r="4" fill="#cc2028" /><path d="M9 9l4 4M13 9l-4 4" stroke="#fff" strokeWidth="1.500" /></svg>
          <svg viewBox="0 0 16 16" className="h-4 w-4"><path d="M4.500 2.500h2v-2h3v2h2v12h-7z" fill="#667b93" stroke="#fff" /><path d="M6 8h4v5H6z" fill="#fff" /></svg>
          <svg viewBox="0 0 16 16" className="h-4 w-4" fill="none"><path d="M1 5.500h3l4-4v13l-4-4H1z" fill="#f4f4f4" stroke="#666" /><path d="M10 5q2 3 0 6M12 3q4 5 0 10" stroke="#fff" strokeWidth="1.500" /></svg>
        </div>
        <time className="ml-3 w-[56px] text-center text-[11px] leading-4 whitespace-nowrap">
          6:49 PM
          <br />
          11/22/2013
        </time>
        <button type="button" aria-label="Show desktop" className="ml-[5px] h-full w-[9px] border border-[#5c708c] bg-[#9fb4cd]" />
      </div>
    </div>
  );
}

export default function App() {
  return (
    <div className="flex h-screen w-full overflow-hidden bg-[#f0f0f0] font-['Open_Sans',sans-serif]">
      <div className="flex min-w-0 flex-1 flex-col">
        <TitleBar />
        <MenuBar />
        <Toolbar />
        <main className="relative flex min-h-0 flex-1 flex-col">
          <div className="flex min-h-0 flex-1">
            <div className="flex min-w-0 flex-1 flex-col">
              <HorizontalRuler />
              <DocumentArea />
            </div>
            <VerticalScrollbar />
          </div>
          <div className="pr-3">
            <HorizontalScrollbar />
          </div>
          <DatasheetWindow />
        </main>
        <StatusBar />
        <Taskbar />
      </div>
      <div className="flex w-1 shrink-0 flex-col">
        <div className="h-[90px] bg-[repeating-linear-gradient(20deg,#7a5a94_0_1px,#9cc7a6_1px_2px,#3d4b52_2px_3px,#c9d3e6_3px_5px)]" />
        <div className="h-[350px] bg-[repeating-linear-gradient(160deg,#fff_0_5px,#a9dcc4_5px_6px,#fff_6px_11px,#c58fd0_11px_12px)]" />
        <div className="flex-1 bg-[repeating-linear-gradient(20deg,#101418_0_2px,#7a4a80_2px_3px,#182420_3px_5px,#5f9a8a_5px_6px)]" />
      </div>
    </div>
  );
}
